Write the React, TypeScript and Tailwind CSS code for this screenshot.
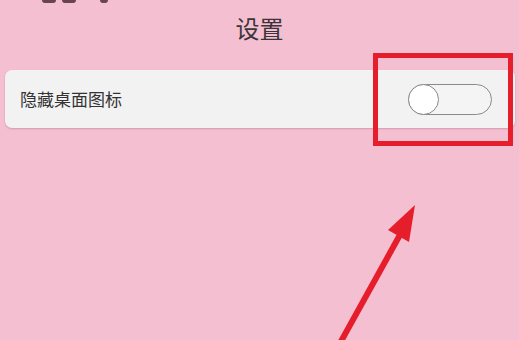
const App = () => {
  return (
    <div
      className="relative w-[519px] h-[340px] overflow-hidden bg-[#f5bfd2]"
      style={{ fontFamily: '"Noto Sans CJK SC", "Noto Sans", sans-serif' }}
    >
      {/* cut-off status text at top */}
      <div className="absolute left-0 top-0 flex gap-[6px] pl-[42px]">
        <span className="block w-[14px] h-[3px] rounded-b bg-[#6a4350]" />
        <span className="block w-[14px] h-[3px] rounded-b bg-[#6a4350]" />
        <span className="block w-[8px] h-[3px] ml-[18px] rounded-b bg-[#6a4350]" />
      </div>

      <div className="pt-[12px] text-center text-[24px] leading-[32px] text-[#3b3438]">设置</div>

      <div className="mt-[26px] ml-[5px] w-[510px] h-[58px] flex items-center justify-between px-[15px] rounded-[7px] bg-[#f2f2f2] shadow-[0_1px_2px_rgba(150,80,100,0.35)]">
        <span className="text-[17px] text-[#333]">隐藏桌面图标</span>
        <div className="mr-[8px] w-[84px] h-[31px] rounded-full border border-[#8a8a8a] bg-[#f4f4f4] flex items-center">
          <div className="w-[31px] h-[31px] -ml-px rounded-full border border-[#8a8a8a] bg-white" />
        </div>
      </div>

      {/* red highlight box */}
      <div className="absolute left-[373px] top-[53px] w-[140px] h-[93px] border-[5px] border-[#e61e2b]" />

      {/* arrow */}
      <svg className="absolute left-0 top-0" width="519" height="340" viewBox="0 0 519 340">
        <line x1="339" y1="345" x2="401" y2="233" stroke="#e61e2b" strokeWidth="6" />
        <polygon points="415,205 388,230 409,242" fill="#e61e2b" />
      </svg>
    </div>
  );
};

export default App;
